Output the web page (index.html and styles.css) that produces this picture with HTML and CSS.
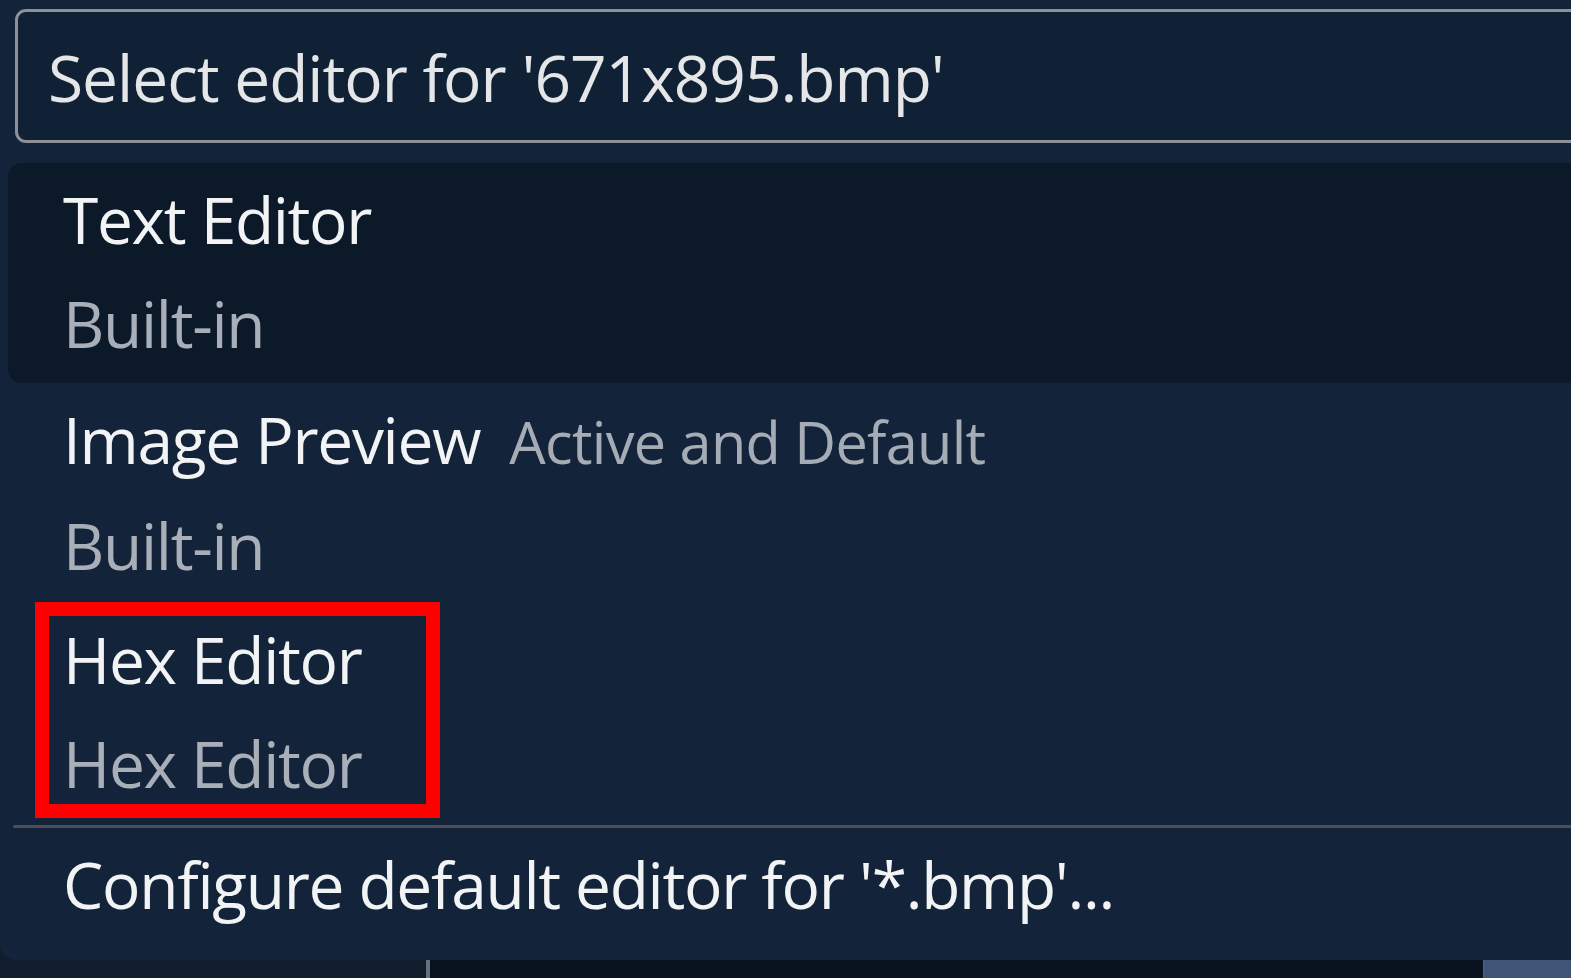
FILE: index.html
```html
<!DOCTYPE html>
<html lang="en">
<head>
<meta charset="utf-8">
<title>Select editor</title>
<link rel="stylesheet" href="styles.css">
</head>
<body>
<div class="page">
  <div class="quick-input">
    <div class="input-box">
      <span class="input-text">Select editor for '671x895.bmp'</span>
    </div>
    <div class="list">
      <div class="row selected">
        <div class="label">Text Editor</div>
        <div class="detail">Built-in</div>
      </div>
      <div class="row">
        <div class="label">Image Preview<span class="description">Active and Default</span></div>
        <div class="detail">Built-in</div>
      </div>
      <div class="row highlighted">
        <div class="label">Hex Editor</div>
        <div class="detail">Hex Editor</div>
        <div class="annotation"></div>
      </div>
      <div class="separator"></div>
      <div class="row single">
        <div class="label">Configure default editor for '*.bmp'...</div>
      </div>
    </div>
  </div>
  <div class="below">
    <div class="below-left"></div>
    <div class="below-divider"></div>
    <div class="below-mid"></div>
    <div class="below-right"></div>
  </div>
</div>
</body>
</html>
```
FILE: styles.css
```css
html, body {
  margin: 0;
  padding: 0;
  height: 100%;
  overflow: hidden;
  background: #0f1d2c;
}

.page {
  width: calc(100% + 40px);
  height: 978px;
  display: flex;
  flex-direction: column;
  font-family: "Open Sans", "Noto Sans", sans-serif;
  font-size: 64px;
  letter-spacing: -1.3px;
}

.quick-input {
  background: #13243a;
  border-bottom-left-radius: 15px;
  padding: 9px 0 20px 0;
  display: flex;
  flex-direction: column;
}

.input-box {
  margin-left: 15px;
  height: 134px;
  box-sizing: border-box;
  border: 3px solid #8b9099;
  border-radius: 11px;
  background: #102135;
  padding: 11px 0 0 30px;
  line-height: 110px;
  color: #e4e6e8;
  white-space: nowrap;
  letter-spacing: -1px;
}

.list {
  margin-top: 20px;
  margin-left: 8px;
  display: flex;
  flex-direction: column;
}

.row {
  position: relative;
  height: 220px;
  box-sizing: border-box;
  padding: 2px 0 0 55px;
  border-radius: 14px 0 0 14px;
  white-space: nowrap;
}

.row.selected {
  background: #0b1929;
}

.row.single {
  height: 112px;
}

.label {
  line-height: 110px;
  color: #f2f3f4;
}

.description {
  margin-left: 29px;
  font-size: 0.9em;
  letter-spacing: -0.7px;
  color: #a6acb5;
}

.detail {
  margin-top: -6px;
  line-height: 110px;
  color: #a9afb8;
}

.separator {
  margin: 2px 0 0 5px;
  height: 3px;
  border-radius: 2px 0 0 2px;
  background: #4b4e56;
}

.annotation {
  position: absolute;
  left: 27px;
  top: -1px;
  width: 405px;
  height: 216px;
  box-sizing: border-box;
  border: 14px solid #ff0000;
}

.below {
  flex: 1;
  display: flex;
}

.below-left {
  width: 426px;
  background: #0f1d2c;
}

.below-divider {
  width: 4px;
  background: #66717f;
}

.below-mid {
  width: 1053px;
  background: #09131f;
}

.below-right {
  flex: 1;
  background: #3e5578;
  border-left: 1px solid #4a6285;
}
```
